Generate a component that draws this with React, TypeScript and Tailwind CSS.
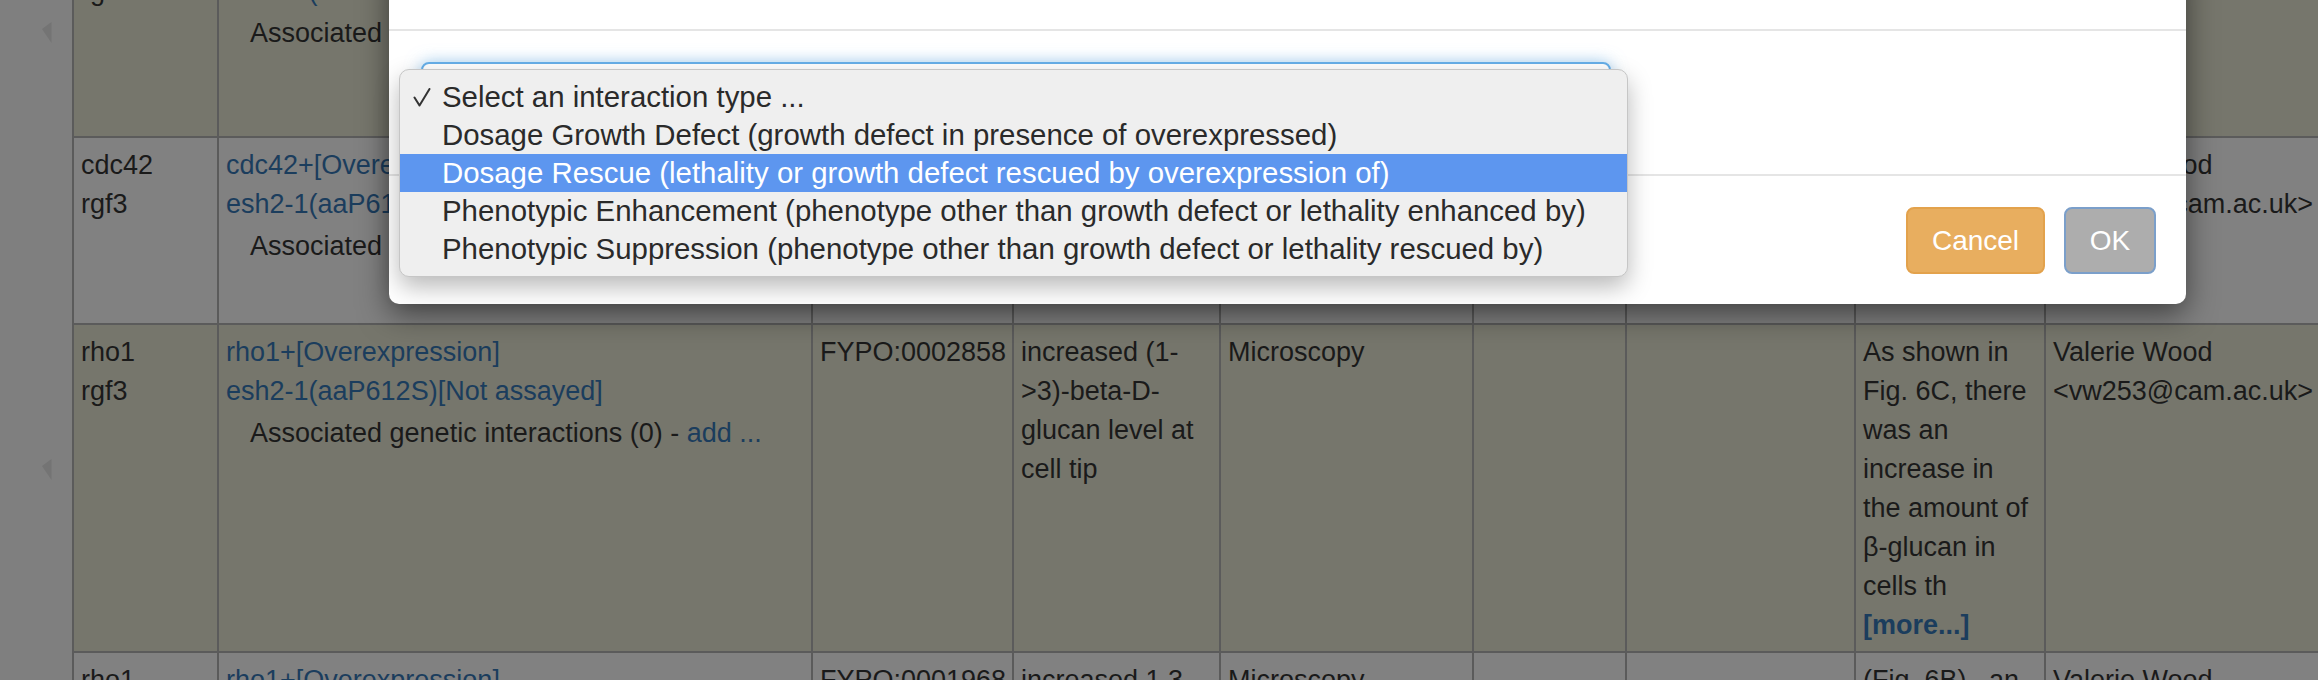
import React from "react";

const COLS = [
  "w-[145px]",
  "w-[594px]",
  "w-[201px]",
  "w-[207px]",
  "w-[253px]",
  "w-[153px]",
  "w-[229px]",
  "w-[190px]",
  "w-[320px]",
];

function Cell({ i, children }: { i: number; children?: React.ReactNode }) {
  return (
    <div className={`${COLS[i]} shrink-0 border-r-2 border-[#5b5b5b] px-[7px] pt-[8px] overflow-hidden whitespace-nowrap`}>
      {children}
    </div>
  );
}

function Link({ children, bold }: { children: React.ReactNode; bold?: boolean }) {
  return <div className={`text-[#1b3d5d] ${bold ? "font-bold" : ""}`}>{children}</div>;
}

function Assoc() {
  return (
    <div className="mt-[3px] pl-[24px]">
      Associated genetic interactions (0) - <span className="text-[#1b3d5d]">add ...</span>
    </div>
  );
}

function Lines({ items }: { items: string[] }) {
  return (
    <>
      {items.map((t, k) => (
        <div key={k}>{t}</div>
      ))}
    </>
  );
}

function Triangle() {
  return (
    <svg width="10" height="22" viewBox="0 0 10 22">
      <polygon points="9.5,0 0,7 9.5,21" fill="#747474" />
    </svg>
  );
}

const options = [
  "Select an interaction type ...",
  "Dosage Growth Defect (growth defect in presence of overexpressed)",
  "Dosage Rescue (lethality or growth defect rescued by overexpression of)",
  "Phenotypic Enhancement (phenotype other than growth defect or lethality enhanced by)",
  "Phenotypic Suppression (phenotype other than growth defect or lethality rescued by)",
];

export default function App() {
  return (
    <div className="relative h-[680px] w-[2318px] overflow-hidden bg-[#7f7f7f] font-['Liberation_Sans',Arial,sans-serif] text-[27px] leading-[39px] text-[#1a1a1a]">
      <div className="flex">
        {/* left gutter with faint markers */}
        <div className="flex w-[72px] shrink-0 flex-col items-end pr-[20px]">
          <div className="mt-[22px]">
            <Triangle />
          </div>
          <div className="mt-[415px]">
            <Triangle />
          </div>
        </div>

        {/* table */}
        <div className="mt-[-75px] flex flex-col border-l-2 border-[#5b5b5b]">
          {/* row 1 */}
          <div className="flex h-[213px] border-b-2 border-[#5b5b5b] bg-[#76766c]">
            <Cell i={0}>
              <Lines items={["cdc42", "rgf3"]} />
            </Cell>
            <Cell i={1}>
              <Link>cdc42+[Overexpression]</Link>
              <Link>esh2-1(aaP612S)[Not assayed]</Link>
              <Assoc />
            </Cell>
            <Cell i={2}>FYPO:0002858</Cell>
            <Cell i={3} />
            <Cell i={4}>Microscopy</Cell>
            <Cell i={5} />
            <Cell i={6} />
            <Cell i={7} />
            <Cell i={8}>
              <Lines items={["Valerie Wood", "<vw253@cam.ac.uk>"]} />
            </Cell>
          </div>

          {/* row 2 */}
          <div className="flex h-[187px] border-b-2 border-[#5b5b5b] bg-[#818181]">
            <Cell i={0}>
              <Lines items={["cdc42", "rgf3"]} />
            </Cell>
            <Cell i={1}>
              <Link>cdc42+[Overexpression]</Link>
              <Link>esh2-1(aaP612S)[Not assayed]</Link>
              <Assoc />
            </Cell>
            <Cell i={2}>FYPO:0002858</Cell>
            <Cell i={3} />
            <Cell i={4}>Microscopy</Cell>
            <Cell i={5} />
            <Cell i={6} />
            <Cell i={7} />
            <Cell i={8}>
              <Lines items={["Valerie Wood", "<vw253@cam.ac.uk>"]} />
            </Cell>
          </div>

          {/* row 3 */}
          <div className="flex h-[328px] border-b-2 border-[#5b5b5b] bg-[#76766c]">
            <Cell i={0}>
              <Lines items={["rho1", "rgf3"]} />
            </Cell>
            <Cell i={1}>
              <Link>rho1+[Overexpression]</Link>
              <Link>esh2-1(aaP612S)[Not assayed]</Link>
              <Assoc />
            </Cell>
            <Cell i={2}>FYPO:0002858</Cell>
            <Cell i={3}>
              <Lines items={["increased (1-", ">3)-beta-D-", "glucan level at", "cell tip"]} />
            </Cell>
            <Cell i={4}>Microscopy</Cell>
            <Cell i={5} />
            <Cell i={6} />
            <Cell i={7}>
              <Lines
                items={[
                  "As shown in",
                  "Fig. 6C, there",
                  "was an",
                  "increase in",
                  "the amount of",
                  "\u03b2-glucan in",
                  "cells th",
                ]}
              />
              <Link bold>[more...]</Link>
            </Cell>
            <Cell i={8}>
              <Lines items={["Valerie Wood", "<vw253@cam.ac.uk>"]} />
            </Cell>
          </div>

          {/* row 4 */}
          <div className="flex h-[120px] bg-[#818181]">
            <Cell i={0}>rho1</Cell>
            <Cell i={1}>
              <Link>rho1+[Overexpression]</Link>
            </Cell>
            <Cell i={2}>FYPO:0001968</Cell>
            <Cell i={3}>increased 1,3-</Cell>
            <Cell i={4}>Microscopy</Cell>
            <Cell i={5} />
            <Cell i={6} />
            <Cell i={7}>(Fig. 6B) , an</Cell>
            <Cell i={8}>Valerie Wood</Cell>
          </div>
        </div>
      </div>

      {/* modal */}
      <div className="absolute left-[389px] top-[-40px] flex h-[344px] w-[1797px] flex-col rounded-[10px] bg-white shadow-[0_10px_30px_rgba(0,0,0,0.5)]">
        <div className="h-[71px] shrink-0 border-b-2 border-[#e5e5e5]" />
        <div className="h-[143px] shrink-0 px-[32px] pt-[31px]">
          <div className="h-[68px] w-[1190px] rounded-[8px] border-2 border-[#66afe9] bg-white shadow-[0_0_16px_rgba(102,175,233,0.6)]" />
        </div>
        <div className="flex flex-1 justify-end gap-[19px] border-t-2 border-[#e5e5e5] pr-[30px] pt-[31px]">
          <button className="h-[67px] w-[139px] rounded-[8px] border-2 border-[#e3a24c] bg-[#e8ae5f] text-[28px] text-white">
            Cancel
          </button>
          <button className="h-[67px] w-[92px] rounded-[8px] border-2 border-[#7b9fca] bg-[#adadad] text-[28px] text-white">
            OK
          </button>
        </div>
      </div>

      {/* native select popup */}
      <div className="absolute left-[399px] top-[69px] w-[1229px] rounded-[10px] border border-[#c6c6c6] bg-[#efefef] pb-[8px] pt-[8px] text-[29.4px] leading-[38px] text-[#2a2a2a] shadow-[0_10px_24px_rgba(0,0,0,0.28)]">
        {options.map((o, k) => (
          <div
            key={k}
            className={`flex h-[38px] items-center whitespace-nowrap ${k === 2 ? "bg-[#5d96ef] text-white" : ""}`}
          >
            <div className="flex w-[42px] shrink-0 justify-end pr-[11px]">
              {k === 0 ? (
                <svg width="18" height="19" viewBox="0 0 18 19">
                  <path d="M1.5 9.5 L6.5 17.5 L16.5 1" fill="none" stroke="#333" strokeWidth="2" strokeLinecap="round" strokeLinejoin="round" />
                </svg>
              ) : null}
            </div>
            <span>{o}</span>
          </div>
        ))}
      </div>
    </div>
  );
}
